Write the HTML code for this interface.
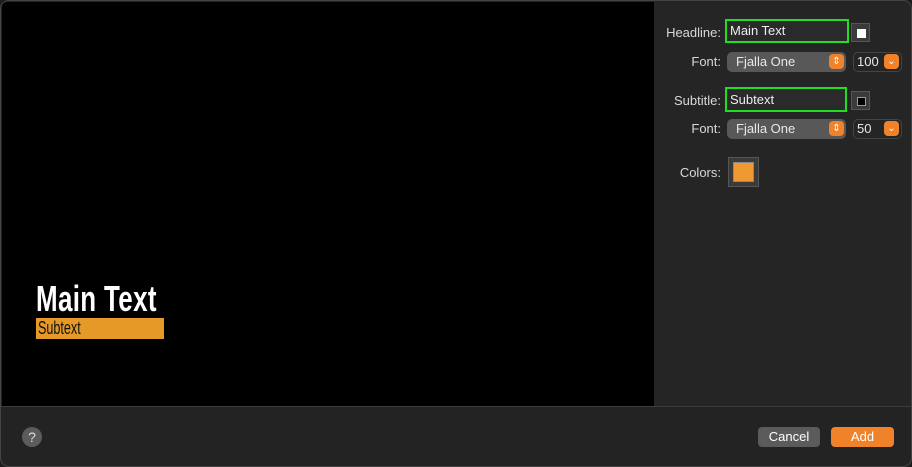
<!DOCTYPE html>
<html><head><style>
*{margin:0;padding:0;box-sizing:border-box}
body{width:912px;height:467px;background:#1e1e1e;font-family:"Liberation Sans",sans-serif;position:relative;overflow:hidden;color:#ddd;font-size:13px}
.win{position:absolute;left:0;top:0;width:912px;height:467px;background:#232323;border:1px solid #444;border-radius:9px;overflow:hidden}
.prev{position:absolute;left:1px;top:1px;width:652px;height:405px;background:#000}
.side{position:absolute;left:653px;top:1px;width:258px;height:405px;background:#252525}
.foot{position:absolute;left:0;top:405px;width:912px;height:1px;background:#3c3c3c}
.a{position:absolute}
.lbl{position:absolute;text-align:right;color:#d8d8d8;font-size:13px}
.field{position:absolute;border:2px solid #1fe01f;background:#2a2a2a;color:#eee;padding-left:3px;font-size:13px}
.chk{position:absolute;width:19px;height:19px;background:#3a3a3a;border:1px solid #555}
.chk i{position:absolute;left:5px;top:5px;width:9px;height:9px}
.sel{position:absolute;background:#585858;border-radius:5px;color:#e8e8e8;padding-left:9px;font-size:13px;line-height:19px}
.st{position:absolute;right:2px;top:2px;width:15px;height:15px;background:#f0822a;border-radius:4px;color:#fff;font-size:10px;line-height:15px;text-align:center}
.num{position:absolute;background:#252525;border:1px solid #444;border-radius:5px;color:#e8e8e8;padding-left:3px;line-height:17px;font-size:13px}
.btn{position:absolute;height:20px;border-radius:4px;color:#fff;text-align:center;line-height:20px;font-size:13px}
</style></head><body>
<div class="win">
<div class="prev">
 <div class="a" style="left:34px;top:276px;font-size:36px;color:#fff;font-weight:bold;transform:scaleX(0.72);transform-origin:left top;letter-spacing:0.5px;white-space:nowrap">Main Text</div>
 <div class="a" style="left:34px;top:316px;width:128px;height:21px;background:#e59a28"></div>
 <div class="a" style="left:36px;top:316px;font-size:18px;color:#111;transform:scaleX(0.7);transform-origin:left top;white-space:nowrap">Subtext</div>
</div>
<div class="side"></div>
<div class="foot"></div>
<div class="lbl" style="left:640px;width:80px;top:24px">Headline:</div>
<div class="field" style="left:724px;top:18px;width:124px;height:24px;line-height:20px">Main Text</div>
<div class="chk" style="left:850px;top:22px"><i style="background:#fff"></i></div>
<div class="lbl" style="left:640px;width:80px;top:53px">Font:</div>
<div class="sel" style="left:726px;top:51px;width:119px;height:20px">Fjalla One<div class="st">⇕</div></div>
<div class="num" style="left:852px;top:51px;width:49px;height:20px">100<div class="st" style="top:1px">⌄</div></div>
<div class="lbl" style="left:640px;width:80px;top:92px">Subtitle:</div>
<div class="field" style="left:724px;top:86px;width:122px;height:25px;line-height:21px">Subtext</div>
<div class="chk" style="left:850px;top:90px"><i style="background:#000;border:1px solid #999"></i></div>
<div class="lbl" style="left:640px;width:80px;top:120px">Font:</div>
<div class="sel" style="left:726px;top:118px;width:119px;height:20px">Fjalla One<div class="st">⇕</div></div>
<div class="num" style="left:852px;top:118px;width:49px;height:20px">50<div class="st" style="top:1px">⌄</div></div>
<div class="lbl" style="left:640px;width:80px;top:164px">Colors:</div>
<div class="a" style="left:727px;top:156px;width:31px;height:30px;background:#3a3a3a;border:1px solid #555"><div class="a" style="left:4px;top:4px;width:21px;height:20px;background:#ef9930;border:1px solid #888"></div></div>
<div class="a" style="left:21px;top:426px;width:20px;height:20px;border-radius:50%;background:#5c5c5c;color:#ddd;text-align:center;line-height:20px;font-size:14px">?</div>
<div class="btn" style="left:757px;top:426px;width:62px;background:#5b5b5b">Cancel</div>
<div class="btn" style="left:830px;top:426px;width:63px;background:#f0822a">Add</div>
</div>
</body></html>
